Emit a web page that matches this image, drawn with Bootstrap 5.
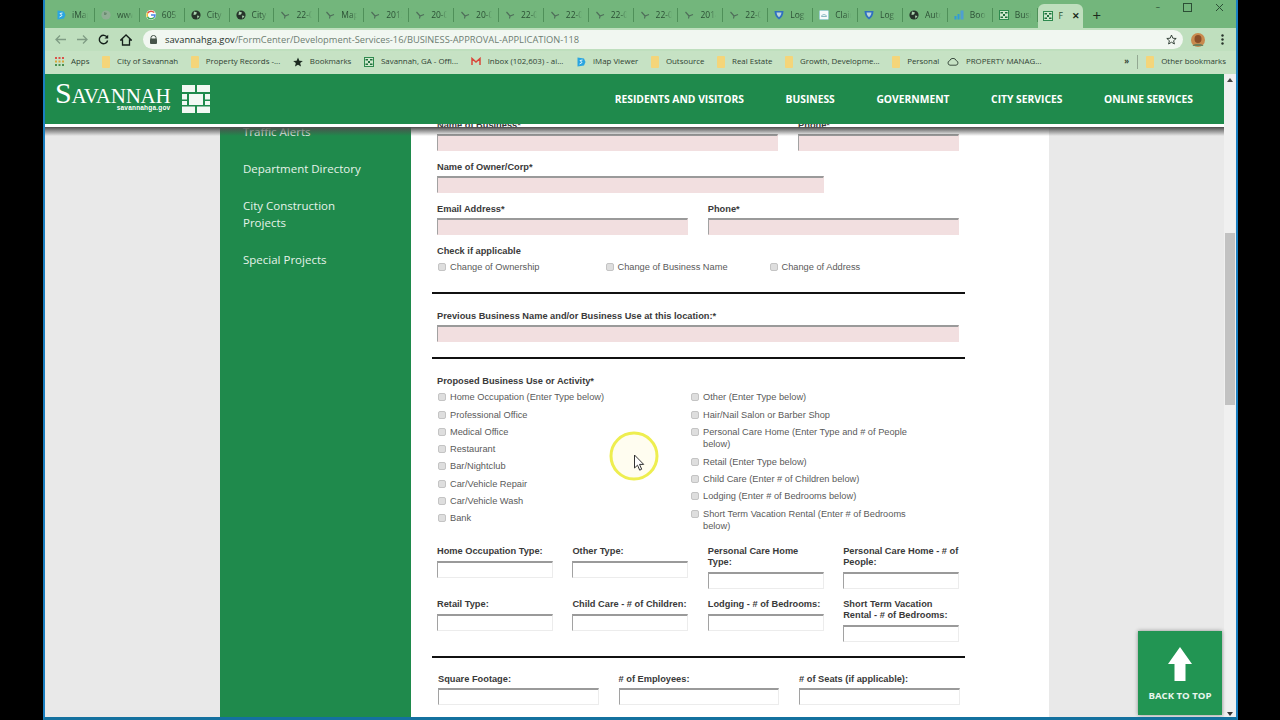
<!DOCTYPE html>
<html lang="en">
<head>
    <meta charset="UTF-8">
    <meta name="viewport" content="width=device-width, initial-scale=1.0">
    <title>Business Approval Application</title>
    <link href="https://cdn.jsdelivr.net/npm/bootstrap@5.3.0/dist/css/bootstrap.min.css" rel="stylesheet">
    <style>
        html, body { height: 720px; overflow: hidden; background: #000; }
        body { font-family: "Liberation Sans", Arial, sans-serif; }

        .browser { margin-left: 43px; width: 1195px; height: 720px; border-left: 2px solid #1a7fc1; border-right: 2px solid #1a7fc1; border-bottom: 3px solid #14719f; position: relative; overflow: hidden; background: #fff; }

        /* browser chrome */
        .tabstrip { height: 28px; background: #73b67c; padding-left: 5px; font-family: "Open Sans", sans-serif; font-size: 8.5px; color: #2c4f35; }
        .tabitem { width: 44.9px; height: 14px; margin-top: 8px; padding-left: 6px; border-right: 1px solid #4f9059; gap: 6px; overflow: hidden; flex: none; }
        .tabitem span { width: 16px; white-space: nowrap; overflow: hidden; -webkit-mask-image: linear-gradient(90deg, #000 60%, transparent); mask-image: linear-gradient(90deg, #000 60%, transparent); }
        .tabitem svg { flex: none; }
        .tabactive { width: 45px; height: 24px; margin-top: 4px; padding-left: 5px; background: #bfdfbe; border-radius: 6px 6px 0 0; gap: 6px; flex: none; }
        .tabclose { font-size: 9px; font-weight: 700; color: #1c2b20; margin-left: 3px; }
        .newtab { font-size: 15px; color: #1c2b20; margin-left: 10px; margin-top: 4px; }
        .winbtns { margin-left: auto; margin-right: 12px; gap: 23px; height: 14px; color: #2c4f35; }

        .toolbar { height: 23px; background: #bfdfbe; padding-left: 9px; }
        .toolbtn { width: 22px; flex: none; }
        .omnibox { width: 1040px; height: 19px; margin-left: 1px; border-radius: 10px; background: #f1f7f1; padding-left: 7px; font-family: "Open Sans", sans-serif; font-size: 9.3px; color: #6d7d71; flex: none; }
        .omnibox b { font-weight: 400; color: #26332a; }
        .starbtn { margin-right: 6px; }
        .bookmarks { height: 23px; background: #c6e2c4; padding-left: 10px; padding-bottom: 1px; font-family: "Open Sans", sans-serif; font-size: 7.9px; color: #2f3f33; white-space: nowrap; gap: 12.6px; }
        .bmk { gap: 7px; flex: none; }
        .bmk-cloud { margin-left: -5px; }
        .foldericon { width: 8px; height: 12px; border-radius: 1px; background: #f4d57a; flex: none; }
        .bmk-sep { width: 1px; height: 14px; background: #93a892; }
        .bmk-end { margin-right: 10px; }

        /* site header */
        .viewport { height: 646px; }
        .pagecol { flex: 1 1 auto; min-width: 0; }
        .siteheader { height: 50px; background: #1f8a4c; color: #fff; padding-left: 10px; padding-right: 31px; }
        .logotext { padding-bottom: 4px; }
        .logoword { font-family: "Liberation Serif", serif; font-size: 30px; line-height: 22px; font-variant: small-caps; letter-spacing: -.25px; }
        .logosub { font-size: 6.5px; line-height: 8px; font-weight: 700; letter-spacing: .2px; text-align: right; }
        .sitenav { gap: 41.6px; padding-top: 1px; font-family: "Open Sans", sans-serif; font-size: 10.3px; font-weight: 700; white-space: nowrap; }

        /* page below the header */
        .pagebody { height: 596px; background: #fff; }
        .gutter { flex: 1 1 0; margin-top: 3px; background: #e9e9e9; }
        .sidemenu { width: 191px; margin-top: 3px; padding-left: 23px; background: #1f8a4c; color: #e6f3ea; font-family: "Open Sans", sans-serif; font-size: 11.5px; line-height: 17px; overflow: hidden; flex: none; }
        .sidemenu ul { margin-top: -4.5px; }
        .sidemenu li { margin-bottom: 20px; }
        .formpanel { width: 638px; padding: 0 90px 0 26px; background: #fff; overflow: hidden; flex: none; color: #3a3a3a; font-size: 9.25px; }
        .forminner { margin-top: -4.5px; }
        .fldrow { --bs-gutter-x: 19.6px; }
        .seatsrow { margin-left: -8.8px; margin-right: -10.8px; margin-top: 15.5px; }
        .fldlabel { display: block; font-weight: 700; line-height: 11px; margin-bottom: 3.5px; }
        .fld { display: block; width: 100%; height: 17px; margin-bottom: 10.5px; padding: 0; border-radius: 0; border: 1px solid #ececec; border-top: 2px solid #9a9a9a; border-left: 1px solid #a2a2a2; background: #fff; }
        .fld-req { background: #f2dfe0; border-right-color: #f2dfe0; border-bottom-color: #f2dfe0; }
        .rule { height: 2px; background: #111; margin-left: -5px; margin-right: -6px; }
        .rule-a { margin-top: 14px; }
        .rule-b { margin-top: 15px; }
        .rule-c { margin-top: 4px; }
        .rule-next { margin-top: 16.5px; }
        .type-rows { margin-top: 9px; }
        .chk-row { margin-top: 4.5px; }
        .chkline { display: flex; align-items: flex-start; gap: 4px; line-height: 12.5px; color: #5a5a5a; margin-bottom: 4.8px; }
        .chkline input { appearance: none; width: 8px; height: 8px; margin: 2px 0 0 1px; flex: none; border-radius: 2px; border: 1px solid #c4c4c4; background: #dedede; }
        .chk-first { width: 167.5px; }
        .chk-second { width: 164px; }
        .uselist-left { width: 253px; flex: none; }
        .uselist-right { width: 222px; flex: none; }

        .scrolltrack { width: 12px; background: #f0f0f0; position: relative; flex: none; }
        .scrollthumb { position: absolute; left: 1px; right: 1px; top: 159px; height: 172px; background: #c2c2c2; }
        .arrowup { position: absolute; left: 3px; top: 4px; width: 0; height: 0; border: 3px solid transparent; border-top: 0; border-bottom: 4px solid #444; }
        .arrowdown { position: absolute; left: 3px; bottom: 4px; width: 0; height: 0; border: 3px solid transparent; border-bottom: 0; border-top: 4px solid #333; }

        /* things floating over the page */
        .headshadow { position: absolute; left: 0; right: 12px; top: 127px; height: 9px; background: linear-gradient(#4e4e4e, rgba(90, 90, 90, 0)); }
        .backtop { position: absolute; left: 1093px; top: 631px; width: 84px; height: 84px; background: #229553; color: #e9f6ee; box-shadow: 0 0 4px rgba(0, 0, 0, .4); font-family: "Open Sans", sans-serif; font-size: 9.6px; font-weight: 700; }
        .pointer { position: absolute; left: 562px; top: 426px; }
    </style>
</head>
<body>
<svg width="0" height="0" class="d-block">
    <symbol id="i-arrow" viewBox="0 0 10 10"><path d="M1.500 2 5 6 9 4.500M5 6 4.500 8.500" fill="none" stroke="#4f6e5a" stroke-width="1.200"/></symbol>
    <symbol id="i-globe" viewBox="0 0 10 10"><circle cx="5" cy="5" r="4.600" fill="#26332a"/><path d="M3 1.500 6 2.500 5 4.500 2.500 5ZM6 5.500 8.500 6 6.500 8.800Z" fill="#a9d3ae"/></symbol>
    <symbol id="i-shield" viewBox="0 0 10 10"><path d="M.5 1h9C9.500 5 7.500 8 5 9.500 2.500 8 .5 5 .5 1Z" fill="#2f6fc0"/><path d="M2.500 2.600h5C7.300 4.600 6.300 6.200 5 7.200 3.700 6.200 2.700 4.600 2.500 2.600Z" fill="#bcd6d8"/></symbol>
    <symbol id="i-imap" viewBox="0 0 10 10"><path d="M1.500 .5 8 1.500 9.500 5 8 8.500 1.500 9.500Z" fill="#2aa5e0"/><path d="M6.500 3 4 3.500 6 5.500 3.500 7" fill="none" stroke="#e8f7fd" stroke-width="1"/></symbol>
    <symbol id="i-sheet" viewBox="0 0 10 10"><rect x=".5" y=".5" width="9" height="9" fill="#cfe8cd" stroke="#2e8a4e"/><path d="M1.500 2h2.500v1.500H1.500zM6 2h2.500v1.500H6zM1.500 6.500h2.500V8H1.500zM6 6.500h2.500V8H6zM4 4h2v2H4z" fill="#1f6f3d"/></symbol>
    <symbol id="i-chart" viewBox="0 0 10 10"><path d="M.5 6h2v3.500h-2zM3.500 4h2v5.500h-2z" fill="#2f9bd8"/><path d="M6.500 .5h3v9h-3z" fill="#4f9fd0"/></symbol>
    <symbol id="i-doc" viewBox="0 0 10 10"><rect x=".5" y=".5" width="9" height="9" rx="1" fill="#f6fbfb" stroke="#9ccfd0"/><path d="M2.500 6.500C2.500 4 7.500 4 7.500 6.500Z" fill="none" stroke="#6fa9b5" stroke-width=".8"/></symbol>
    <symbol id="i-google" viewBox="0 0 10 10"><circle cx="5" cy="5" r="5" fill="#fff"/><path d="M8.200 2.600A4 4 0 0 0 1.600 3.200" fill="none" stroke="#e2503f" stroke-width="1.500"/><path d="M1.600 3.200A4 4 0 0 0 1.600 6.800" fill="none" stroke="#f2bd2c" stroke-width="1.500"/><path d="M1.600 6.800A4 4 0 0 0 8 7.600" fill="none" stroke="#3ba757" stroke-width="1.500"/><path d="M8 7.600A4 4 0 0 0 9 5H5" fill="none" stroke="#4a84e8" stroke-width="1.500"/></symbol>
    <symbol id="i-www" viewBox="0 0 10 10"><circle cx="5" cy="5" r="4.600" fill="#8fae94"/><path d="M3 2 6 3 5 5 3 5Z" fill="#6a8a70"/></symbol>
</svg>

<div class="browser">
    <div id="tabs" class="tabstrip d-flex align-items-start"></div>

    <div class="toolbar d-flex align-items-center">
        <div class="toolbtn d-flex"><svg width="13" height="11" viewBox="0 0 13 11"><path d="M12 5.500H2M6 1.500 2 5.500l4 4" fill="none" stroke="#7f9c84" stroke-width="1.300"/></svg></div>
        <div class="toolbtn d-flex"><svg width="13" height="11" viewBox="0 0 13 11"><path d="M1 5.500h10M7 1.500l4 4-4 4" fill="none" stroke="#7f9c84" stroke-width="1.300"/></svg></div>
        <div class="toolbtn d-flex"><svg width="11" height="11" viewBox="0 0 11 11"><path d="M9.200 3.500A4.200 4.200 0 1 0 9.600 6.500" fill="none" stroke="#14201a" stroke-width="1.400"/><path d="M10.200 .8v3.700H6.500Z" fill="#14201a"/></svg></div>
        <div class="toolbtn d-flex"><svg width="12" height="12" viewBox="0 0 12 12"><path d="M6 1 .8 6H2.500v5h7V6h1.700Z" fill="none" stroke="#14201a" stroke-width="1.300"/></svg></div>
        <div class="omnibox d-flex align-items-center">
            <svg class="me-2" width="7" height="9" viewBox="0 0 7 9"><path d="M1 4V2.500a2.500 2 0 0 1 5 0V4" fill="none" stroke="#46544a"/><rect y="3.500" width="7" height="5.500" rx="1" fill="#46544a"/></svg>
            <span><b>savannahga.gov</b>/FormCenter/Development-Services-16/BUSINESS-APPROVAL-APPLICATION-118</span>
            <svg class="ms-auto starbtn" width="11" height="11" viewBox="0 0 11 11"><path d="M5.500 1 6.800 4.200l3.400.3-2.600 2.200.8 3.300-2.900-1.800L2.600 10l.8-3.300L.8 4.500l3.400-.3Z" fill="none" stroke="#26332a" stroke-width=".9"/></svg>
        </div>
        <svg class="ms-2" width="14" height="14" viewBox="0 0 14 14"><circle cx="7" cy="7" r="7" fill="#c98a4e"/><ellipse cx="7" cy="6" rx="3.500" ry="4" fill="#8a4f28"/><path d="M1.500 13C3 10 11 10 12.500 13Z" fill="#6e7f5a"/></svg>
        <svg class="ms-3" width="3" height="11" viewBox="0 0 3 11"><circle cx="1.500" cy="1.500" r="1.200" fill="#26332a"/><circle cx="1.500" cy="5.500" r="1.200" fill="#26332a"/><circle cx="1.500" cy="9.500" r="1.200" fill="#26332a"/></svg>
    </div>

    <div class="bookmarks d-flex align-items-center">
        <div class="bmk d-flex align-items-center"><svg width="9" height="9" viewBox="0 0 9 9"><path d="M0 0h2v2H0zM3.500 0h2v2h-2zM7 0h2v2H7z" fill="#d9534a"/><path d="M0 3.500h2v2H0zM3.500 3.500h2v2h-2zM7 3.500h2v2H7z" fill="#d9a63a"/><path d="M0 7h2v2H0zM3.500 7h2v2h-2zM7 7h2v2H7z" fill="#4a8f4f"/></svg>Apps</div>
        <div class="bmk d-flex align-items-center"><i class="foldericon"></i>City of Savannah</div>
        <div class="bmk d-flex align-items-center"><i class="foldericon"></i>Property Records -...</div>
        <div class="bmk d-flex align-items-center"><svg width="10" height="10" viewBox="0 0 11 11"><path d="M5.500 .5 7 4l3.800.3-2.900 2.400.9 3.800-3.300-2-3.300 2 .9-3.800L.2 4.300 4 4Z" fill="#1c2b20"/></svg>Bookmarks</div>
        <div class="bmk d-flex align-items-center"><svg width="10" height="10"><use href="#i-sheet"/></svg>Savannah, GA - Offi...</div>
        <div class="bmk d-flex align-items-center"><svg width="10" height="9" viewBox="0 0 10 9"><path d="M1 8V1.500L5 5l4-3.500V8" fill="none" stroke="#d9483b" stroke-width="1.500"/></svg>Inbox (102,603) - ai...</div>
        <div class="bmk d-flex align-items-center"><svg width="10" height="10"><use href="#i-imap"/></svg>iMap Viewer</div>
        <div class="bmk d-flex align-items-center"><i class="foldericon"></i>Outsource</div>
        <div class="bmk d-flex align-items-center"><i class="foldericon"></i>Real Estate</div>
        <div class="bmk d-flex align-items-center"><i class="foldericon"></i>Growth, Developme...</div>
        <div class="bmk d-flex align-items-center"><i class="foldericon"></i>Personal</div>
        <div class="bmk bmk-cloud d-flex align-items-center"><svg width="12" height="9" viewBox="0 0 12 9"><path d="M3 8.200a2.300 2.300 0 0 1-.3-4.500 3.500 3.500 0 0 1 6.600 0A2.300 2.300 0 0 1 9 8.200Z" fill="none" stroke="#2f3f33" stroke-width=".9"/></svg>PROPERTY MANAG...</div>
        <div class="ms-auto d-flex align-items-center gap-2 bmk-end">
            <b>»</b><span class="bmk-sep"></span>
            <div class="bmk d-flex align-items-center"><i class="foldericon"></i>Other bookmarks</div>
        </div>
    </div>

    <div class="viewport d-flex">
        <div class="pagecol">
            <header class="siteheader d-flex align-items-center justify-content-between">
                <div class="d-flex align-items-center gap-2">
                    <div class="logotext">
                        <div class="logoword">Savannah</div>
                        <div class="logosub">savannahga.gov</div>
                    </div>
                    <svg class="ms-1" width="28" height="28" viewBox="0 0 28 28" fill="#f2f8f3"><path d="M0 0h13v7H0zM15 0h13v7H15zM0 9h5v5.500H0zM0 16h5v4H0zM23 9h5v5.500h-5zM23 16h5v4h-5zM7 9h14v11H7zM0 21.500h13V28H0zM15 21.500h13V28H15z"/></svg>
                </div>
                <nav class="sitenav d-flex">
                    <span>RESIDENTS AND VISITORS</span>
                    <span>BUSINESS</span>
                    <span>GOVERNMENT</span>
                    <span>CITY SERVICES</span>
                    <span>ONLINE SERVICES</span>
                </nav>
            </header>

            <div class="pagebody d-flex">
                <div class="gutter"></div>
                <aside class="sidemenu">
                    <ul class="list-unstyled">
                        <li>Traffic Alerts</li>
                        <li>Department Directory</li>
                        <li>City Construction<br>Projects</li>
                        <li>Special Projects</li>
                    </ul>
                </aside>
                <main class="formpanel">
                    <div class="forminner">
                        <div class="row fldrow">
                            <div class="col-8"><label class="fldlabel">Name of Business*</label><input class="fld fld-req"></div>
                            <div class="col-4"><label class="fldlabel">Phone*</label><input class="fld fld-req"></div>
                        </div>
                        <div class="row fldrow">
                            <div class="col-9"><label class="fldlabel">Name of Owner/Corp*</label><input class="fld fld-req"></div>
                        </div>
                        <div class="row fldrow">
                            <div class="col-6"><label class="fldlabel">Email Address*</label><input class="fld fld-req"></div>
                            <div class="col-6"><label class="fldlabel">Phone*</label><input class="fld fld-req"></div>
                        </div>
                        <label class="fldlabel">Check if applicable</label>
                        <div class="d-flex chk-row">
                            <label class="chkline chk-first"><input type="checkbox">Change of Ownership</label>
                            <label class="chkline chk-second"><input type="checkbox">Change of Business Name</label>
                            <label class="chkline"><input type="checkbox">Change of Address</label>
                        </div>
                        <div class="rule rule-a"></div>
                        <label class="fldlabel rule-next">Previous Business Name and/or Business Use at this location:*</label>
                        <input class="fld fld-req">
                        <div class="rule rule-b"></div>
                        <label class="fldlabel rule-next">Proposed Business Use or Activity*</label>
                        <div class="d-flex chk-row">
                            <div class="uselist-left">
                                <label class="chkline"><input type="checkbox">Home Occupation (Enter Type below)</label>
                                <label class="chkline"><input type="checkbox">Professional Office</label>
                                <label class="chkline"><input type="checkbox">Medical Office</label>
                                <label class="chkline"><input type="checkbox">Restaurant</label>
                                <label class="chkline"><input type="checkbox">Bar/Nightclub</label>
                                <label class="chkline"><input type="checkbox">Car/Vehicle Repair</label>
                                <label class="chkline"><input type="checkbox">Car/Vehicle Wash</label>
                                <label class="chkline"><input type="checkbox">Bank</label>
                            </div>
                            <div class="uselist-right">
                                <label class="chkline"><input type="checkbox">Other (Enter Type below)</label>
                                <label class="chkline"><input type="checkbox">Hair/Nail Salon or Barber Shop</label>
                                <label class="chkline"><input type="checkbox">Personal Care Home (Enter Type and # of People below)</label>
                                <label class="chkline"><input type="checkbox">Retail (Enter Type below)</label>
                                <label class="chkline"><input type="checkbox">Child Care (Enter # of Children below)</label>
                                <label class="chkline"><input type="checkbox">Lodging (Enter # of Bedrooms below)</label>
                                <label class="chkline"><input type="checkbox">Short Term Vacation Rental (Enter # of Bedrooms below)</label>
                            </div>
                        </div>
                        <div class="row fldrow type-rows">
                            <div class="col-3"><label class="fldlabel">Home Occupation Type:</label><input class="fld"></div>
                            <div class="col-3"><label class="fldlabel">Other Type:</label><input class="fld"></div>
                            <div class="col-3"><label class="fldlabel">Personal Care Home Type:</label><input class="fld"></div>
                            <div class="col-3"><label class="fldlabel">Personal Care Home - # of People:</label><input class="fld"></div>
                        </div>
                        <div class="row fldrow">
                            <div class="col-3"><label class="fldlabel">Retail Type:</label><input class="fld"></div>
                            <div class="col-3"><label class="fldlabel">Child Care - # of Children:</label><input class="fld"></div>
                            <div class="col-3"><label class="fldlabel">Lodging - # of Bedrooms:</label><input class="fld"></div>
                            <div class="col-3"><label class="fldlabel">Short Term Vacation Rental - # of Bedrooms:</label><input class="fld"></div>
                        </div>
                        <div class="rule rule-c"></div>
                        <div class="row fldrow seatsrow">
                            <div class="col-4"><label class="fldlabel">Square Footage:</label><input class="fld"></div>
                            <div class="col-4"><label class="fldlabel"># of Employees:</label><input class="fld"></div>
                            <div class="col-4"><label class="fldlabel"># of Seats (if applicable):</label><input class="fld"></div>
                        </div>
                    </div>
                </main>
                <div class="gutter"></div>
            </div>
        </div>
        <div class="scrolltrack">
            <span class="arrowup"></span>
            <div class="scrollthumb"></div>
            <span class="arrowdown"></span>
        </div>
    </div>

    <div class="headshadow"></div>

    <a class="backtop d-flex flex-column align-items-center text-decoration-none">
        <svg class="mt-3" width="24" height="34" viewBox="0 0 24 34"><path d="M12 0 24 17H17.500V34H6.500V17H0Z" fill="#fff"/></svg>
        <span class="mt-2">BACK TO TOP</span>
    </a>

    <svg class="pointer" width="58" height="60" viewBox="0 0 58 60">
        <circle cx="27" cy="30" r="23" fill="#fffdf0" stroke="#eeee50" stroke-width="3"/>
        <path d="M27.500 29v13l3-2.800 2.200 5 2-1-2.200-4.800h4.200Z" fill="#fff" stroke="#333" stroke-width="1"/>
    </svg>
</div>

<script src="https://cdn.jsdelivr.net/npm/bootstrap@5.3.0/dist/js/bootstrap.bundle.min.js"></script>
<script>
    // tab strip: icon id + title, one entry per open tab
    const tabs = [
        ['i-imap', 'iMap'], ['i-www', 'www'], ['i-google', '605'], ['i-globe', 'City'], ['i-globe', 'City'],
        ['i-arrow', '22-0'], ['i-arrow', 'Map'], ['i-arrow', '2013'], ['i-arrow', '20-0'], ['i-arrow', '20-0'],
        ['i-arrow', '22-0'], ['i-arrow', '22-0'], ['i-arrow', '22-0'], ['i-arrow', '22-0'], ['i-arrow', '2014'], ['i-arrow', '22-0'],
        ['i-shield', 'Log'], ['i-doc', 'Clair'], ['i-shield', 'Log'], ['i-globe', 'Auto'], ['i-chart', 'Bool'], ['i-sheet', 'Busi']
    ];

    const strip = document.getElementById('tabs');
    strip.innerHTML = tabs.map(t => `
        <div class="tabitem d-flex align-items-center">
            <svg width="10" height="10"><use href="#${t[0]}"/></svg><span>${t[1]}</span>
        </div>`).join('') + `
        <div class="tabactive d-flex align-items-center">
            <svg width="10" height="10"><use href="#i-sheet"/></svg>F<span class="tabclose">✕</span>
        </div>
        <div class="newtab">+</div>
        <div class="winbtns d-flex align-items-center">
            <span>–</span>
            <svg width="9" height="9"><rect x=".5" y=".5" width="8" height="8" fill="none" stroke="#2c4f35"/></svg>
            <svg width="9" height="9"><path d="M1 1l7 7M8 1 1 8" stroke="#2c4f35" fill="none"/></svg>
        </div>`;
</script>
</body>
</html>
